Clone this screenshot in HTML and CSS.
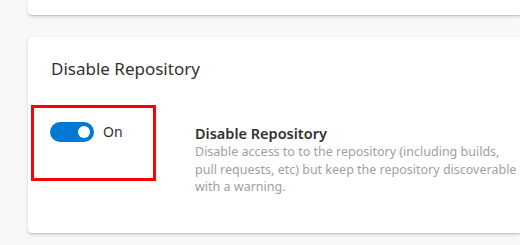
FILE: index.html
```html
<!DOCTYPE html>
<html lang="en">
<head>
    <meta charset="UTF-8">
    <meta name="viewport" content="width=device-width, initial-scale=1.0">
    <title>Repository Settings</title>
    <link rel="stylesheet" href="styles.css">
</head>
<body>
    <main class="page">
        <section class="card card-top"></section>

        <section class="card">
            <h2 class="card-title">Disable Repository</h2>
            <div class="setting">
                <div class="toggle-wrap">
                    <span class="toggle on"><span class="knob"></span></span>
                    <span class="toggle-label">On</span>
                </div>
                <div class="setting-text">
                    <h3>Disable Repository</h3>
                    <p>Disable access to to the repository (including builds, pull requests, etc) but keep the repository discoverable with a warning.</p>
                </div>
            </div>
        </section>
    </main>
</body>
</html>
```

FILE: styles.css
```css
:root {
    --page-bg: #f8f8f8;
    --card-bg: #ffffff;
    --accent: #0078d4;
    --text: #323130;
    --muted: #a19f9d;
}

body {
    margin: 0;
    background: var(--page-bg);
    font-family: 'Segoe UI', 'Noto Sans', sans-serif;
    color: var(--text);
    overflow: hidden;
}

.page {
    padding-left: 28px;
}

.card {
    background: var(--card-bg);
    border-radius: 4px 0 0 4px;
    box-shadow: 0 1.6px 3.6px rgba(0, 0, 0, 0.13), 0 0.3px 0.9px rgba(0, 0, 0, 0.11);
    height: 196px;
    box-sizing: border-box;
    padding: 20px 0 0 23px;
    margin-bottom: 22px;
}

.card-top {
    height: 15px;
    padding: 0;
    border-radius: 0 0 0 4px;
}

.card-title {
    margin: 0;
    font-size: 17px;
    font-weight: 400;
    line-height: 24px;
}

.setting {
    display: flex;
    align-items: flex-start;
    margin-top: 24px;
    margin-left: -20px;
}

.toggle-wrap {
    display: flex;
    align-items: flex-start;
    gap: 9px;
    box-sizing: border-box;
    border: 3px solid #ff0000;
    padding: 14px 0 0 16px;
    width: 125px;
    height: 76px;
}

.toggle {
    display: flex;
    align-items: center;
    width: 44px;
    height: 20px;
    border-radius: 10px;
    box-sizing: border-box;
    padding: 0 4px;
}

.toggle.on {
    background: var(--accent);
    justify-content: flex-end;
}

.knob {
    width: 12px;
    height: 12px;
    border-radius: 50%;
    background: #ffffff;
}

.toggle-label {
    font-size: 14px;
    line-height: 20px;
}

.setting-text {
    margin-left: 39px;
    margin-top: 18px;
    width: 325px;
}

.setting-text h3 {
    margin: 0;
    font-size: 14.5px;
    font-weight: 600;
    line-height: 20px;
}

.setting-text p {
    margin: 0;
    font-size: 12.5px;
    line-height: 17.5px;
    color: var(--muted);
}
```
